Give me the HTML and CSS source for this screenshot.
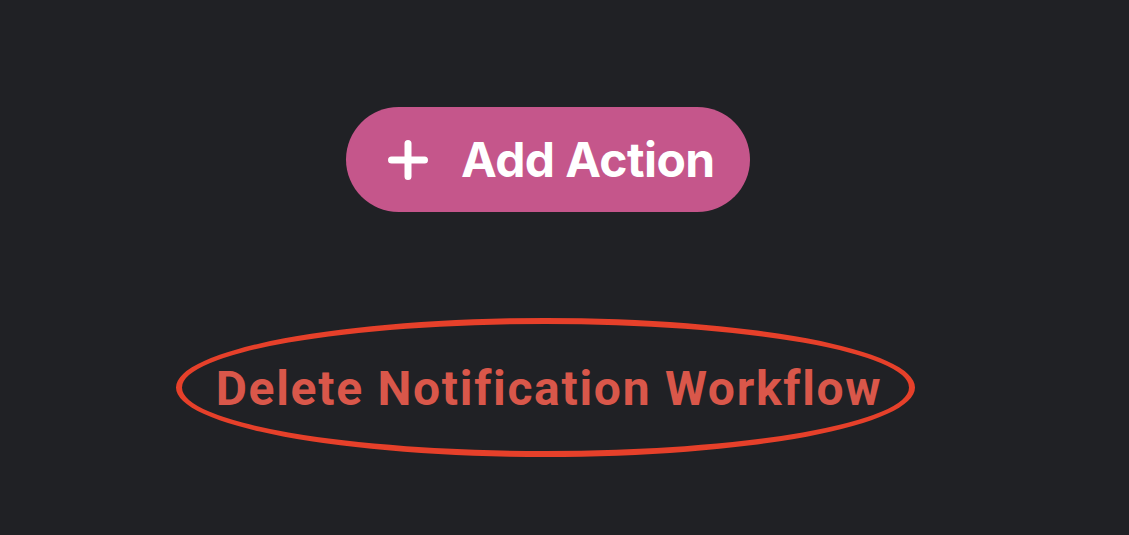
FILE: index.html
```html
<!DOCTYPE html>
<html lang="en">

<head>
    <meta charset="UTF-8">
    <title>Notification Workflow</title>
    <link rel="stylesheet" href="styles.css">
</head>

<body>
    <div class="main-content">
        <!-- Add action button -->
        <button class="add-btn">
            <svg class="plus-icon" width="40" height="40" viewBox="0 0 40 40">
                <path d="M20 3.5 V36.5 M3.5 20 H36.5" stroke="#fff" stroke-width="7" stroke-linecap="round" fill="none" />
            </svg>
            <span>Add Action</span>
        </button>

        <!-- Delete link, circled -->
        <div class="delete-ring">
            <a class="delete-link">Delete Notification Workflow</a>
        </div>
    </div>
</body>

</html>
```

FILE: styles.css
```css
* {
    margin: 0;
    padding: 0;
    box-sizing: border-box;
}

body {
    background-color: #202125;
    min-height: 100vh;
}

.main-content {
    display: flex;
    flex-direction: column;
    align-items: center;
    padding-top: 107px;
    padding-right: 33px;
}

/* Pink pill button */
.add-btn {
    display: flex;
    align-items: center;
    width: 404px;
    height: 105px;
    padding-left: 42px;
    gap: 33px;
    background-color: #c5568b;
    border: none;
    border-radius: 53px;
    color: #fff;
    font-family: 'Inter', sans-serif;
    font-size: 48px;
    font-weight: 700;
    letter-spacing: -0.6px;
    cursor: pointer;
}

.plus-icon {
    flex-shrink: 0;
}

/* Red ellipse around the delete link */
.delete-ring {
    display: flex;
    justify-content: center;
    align-items: center;
    width: 739px;
    height: 139px;
    margin-top: 106px;
    margin-right: 6px;
    border: 6px solid #e6402a;
    border-radius: 50%;
}

.delete-link {
    color: #d9574a;
    font-family: 'Roboto', sans-serif;
    font-size: 48px;
    font-weight: 700;
    letter-spacing: 1.7px;
    margin-left: 8px;
    margin-top: 2px;
    cursor: pointer;
}
```
